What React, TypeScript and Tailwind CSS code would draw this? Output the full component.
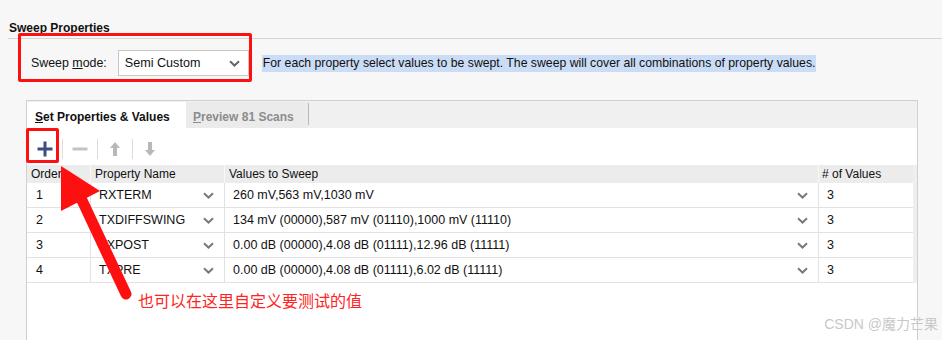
import React from 'react';

const rows = [
  { order: '1', name: 'RXTERM', values: '260 mV,563 mV,1030 mV', count: '3' },
  { order: '2', name: 'TXDIFFSWING', values: '134 mV (00000),587 mV (01110),1000 mV (11110)', count: '3' },
  { order: '3', name: 'TXPOST', values: '0.00 dB (00000),4.08 dB (01111),12.96 dB (11111)', count: '3' },
  { order: '4', name: 'TXPRE', values: '0.00 dB (00000),4.08 dB (01111),6.02 dB (11111)', count: '3' },
];

function Chevron({ color = '#7a7a7a' }: { color?: string }) {
  return (
    <svg width="11" height="7" viewBox="0 0 11 7">
      <path d="M1 1.2 L5.5 5.5 L10 1.2" fill="none" stroke={color} strokeWidth="2" />
    </svg>
  );
}

function Sep() {
  return <div className="h-[20px] w-px bg-[#dcdcdc]" />;
}

export default function App() {
  return (
    <div
      className="relative h-[340px] w-[942px] overflow-hidden bg-[#f7f7f7] text-[12px] text-[#111]"
      style={{ fontFamily: '"Liberation Sans", Arial, sans-serif' }}
    >
      {/* Section title */}
      <div className="ml-[8px] border-b border-[#d4d4d4] pb-[2px] pl-[1px] pt-[20px] font-bold leading-[16px]">
        Sweep Properties
      </div>

      {/* Sweep mode row */}
      <div className="mt-[11px] flex items-center pl-[31px]">
        <span className="text-[12.4px]">
          Sweep <span className="underline">m</span>ode:
        </span>
        <div className="ml-[11px] flex h-[26px] w-[131px] items-center justify-between border border-[#c8c8c8] bg-white pl-[6px] pr-[8px] text-[12.6px]">
          <span>Semi Custom</span>
          <Chevron color="#666" />
        </div>
        <span className="ml-[13px] bg-[#cadcf6] px-px text-[12.25px] leading-[17px]">
          For each property select values to be swept. The sweep will cover all combinations of property values.
        </span>
      </div>

      {/* Panel */}
      <div className="ml-[26px] mt-[24px] h-[240px] w-[892px] border-l border-r border-t border-[#d0d0d0] bg-[#f0f0f0]">
        {/* Tabs */}
        <div className="flex h-[27px] items-end pt-[1px]">
          <div className="flex h-[26px] w-[159px] items-center bg-white pl-[8px] pt-[3px] font-bold">
            <span>
              <span className="underline">S</span>et Properties &amp; Values
            </span>
          </div>
          <div className="flex h-[26px] w-[122px] items-center bg-[#ebebeb] pl-[7px] pt-[3px] font-bold text-[#8c8c8c]">
            <span>
              <span className="underline">P</span>review 81 Scans
            </span>
          </div>
          <div className="mb-[3px] h-[22px] w-px bg-[#b8b8b8]" />
        </div>

        {/* White content */}
        <div className="h-full bg-white">
          {/* Toolbar */}
          <div className="flex h-[37px] items-center pt-[4px]">
            <div className="flex w-[35px] justify-center">
              <svg width="16" height="16" viewBox="0 0 16 16">
                <rect x="0.5" y="6.5" width="15" height="3" fill="#3b4f7f" />
                <rect x="6.5" y="0.5" width="3" height="15" fill="#3b4f7f" />
              </svg>
            </div>
            <Sep />
            <div className="flex w-[34px] justify-center">
              <svg width="16" height="16" viewBox="0 0 16 16">
                <rect x="0.5" y="6.5" width="15" height="3" fill="#c4c4c4" />
              </svg>
            </div>
            <Sep />
            <div className="flex w-[34px] justify-center">
              <svg width="12" height="16" viewBox="0 0 12 16">
                <path d="M6 1 L11 7 L8 7 L8 15 L4 15 L4 7 L1 7 Z" fill="#b8b8b8" />
              </svg>
            </div>
            <Sep />
            <div className="flex w-[34px] justify-center">
              <svg width="12" height="16" viewBox="0 0 12 16">
                <path d="M6 15 L11 9 L8 9 L8 1 L4 1 L4 9 L1 9 Z" fill="#b8b8b8" />
              </svg>
            </div>
          </div>

          {/* Table */}
          <div className="flex">
            <div className="w-[886px]">
              <div className="grid h-[18px] grid-cols-[64px_134px_594px_94px] items-center bg-[#ececec] leading-[18px]">
                <div className="border-r border-[#f8f8f8] pl-[4px]">Order</div>
                <div className="border-r border-[#f8f8f8] pl-[4px]">Property Name</div>
                <div className="border-r border-[#f8f8f8] pl-[4px]">Values to Sweep</div>
                <div className="pl-[3px]"># of Values</div>
              </div>
              {rows.map((r) => (
                <div
                  key={r.order}
                  className="grid h-[25px] grid-cols-[64px_134px_594px_94px] border-b border-[#e2e2e2] text-[12.5px] leading-[25px]"
                >
                  <div className="border-r border-[#e2e2e2] pl-[9px]">{r.order}</div>
                  <div className="flex items-center justify-between border-r border-[#e2e2e2] pl-[8px] pr-[10px]">
                    <span>{r.name}</span>
                    <Chevron />
                  </div>
                  <div className="flex items-center justify-between border-r border-[#e2e2e2] pl-[8px] pr-[10px]">
                    <span>{r.values}</span>
                    <Chevron />
                  </div>
                  <div className="pl-[8px]">{r.count}</div>
                </div>
              ))}
            </div>
            <div className="h-[118px] w-[4px] bg-[#efefef]" />
          </div>
        </div>
      </div>

      {/* Annotations */}
      <div className="absolute left-[18px] top-[33px] h-[49px] w-[234px] rounded-[2px] border-[3px] border-[#ff1010]" />
      <div className="absolute left-[26px] top-[128px] h-[35px] w-[33px] rounded-[2px] border-[3px] border-[#ff1010]" />
      <svg className="pointer-events-none absolute left-0 top-0" width="942" height="340" viewBox="0 0 942 340">
        <polygon points="61,166 100,191 61,211" fill="#ff1010" />
        <line x1="80" y1="196" x2="126" y2="294" stroke="#ff1010" strokeWidth="11" strokeLinecap="round" />
      </svg>
      <div
        className="absolute left-[138px] top-[292px] whitespace-nowrap text-[16px] leading-[16px] text-[#ff2424]"
        style={{ fontFamily: '"Noto Sans CJK SC", sans-serif' }}
      >
        也可以在这里自定义要测试的值
      </div>
      <div
        className="absolute right-[4px] top-[316px] whitespace-nowrap text-[14px] leading-[16px] text-[#c8c8c8]"
        style={{ fontFamily: '"Liberation Sans", "Noto Sans CJK SC", sans-serif' }}
      >
        CSDN @魔力芒果
      </div>
    </div>
  );
}
